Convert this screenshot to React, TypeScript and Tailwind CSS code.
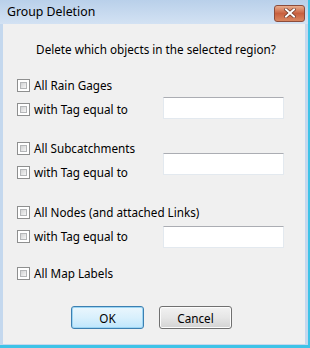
import React from "react";

const Check = ({ label }: { label: string }) => (
  <label className="flex items-center h-[24px] gap-[4px] whitespace-nowrap">
    <span className="w-[13px] h-[13px] shrink-0 border border-[#8e8f8f] bg-white p-[2px] flex">
      <span className="flex-1 border border-[#b4b6b8] bg-gradient-to-br from-[#d2d3d4] to-[#f6f6f6]" />
    </span>
    <span>{label}</span>
  </label>
);

const TagInput = ({ top }: { top: string }) => (
  <div className={`w-[121px] h-[22px] shrink-0 bg-white border border-[#e3e9ef] border-t-[#abadb3] ${top}`} />
);

const Group = ({ label, top }: { label: string; top: string }) => (
  <div className="flex">
    <div className="flex flex-col w-[146px]">
      <Check label={label} />
      <Check label="with Tag equal to" />
    </div>
    <TagInput top={top} />
  </div>
);

export default function App() {
  return (
    <div className="w-[310px] h-[348px] flex flex-col bg-[#c4d8ee] border-r-[2px] border-b-[3px] border-[#3ec3e7] font-['Noto_Sans',sans-serif] text-[11.7px] text-black">
      <div className="h-[24px] flex items-center justify-between pl-[7px] pr-[3px] bg-gradient-to-b from-[#b9d0ea] to-[#d3e2f3]">
        <span className="text-[12.3px] leading-none">Group Deletion</span>
        <div className="w-[31px] h-[17px] mt-[2px] rounded-[3px] border border-[#8b4c3c] bg-gradient-to-b from-[#e8ad8e] via-[#c8603f] to-[#d98660] flex items-center justify-center">
          <svg width="12" height="10" viewBox="0 0 12 10">
            <path d="M2 1.5 L10 8.5 M10 1.5 L2 8.5" stroke="#6a3424" strokeWidth="3.4" strokeLinecap="square" />
            <path d="M2 1.5 L10 8.5 M10 1.5 L2 8.5" stroke="#ffffff" strokeWidth="2" strokeLinecap="square" />
          </svg>
        </div>
      </div>
      <div className="flex-1 flex pl-[3px] pr-[3px] pb-[1px]">
        <div className="flex-1 bg-[#f0f0f0] flex flex-col pl-[14px] pt-[17px] leading-[16px]">
          <p className="text-center pr-[10px]">Delete which objects in the selected region?</p>
          <div className="mt-[16px]">
            <Group label="All Rain Gages" top="mt-[24px]" />
          </div>
          <div className="mt-[15px]">
            <Group label="All Subcatchments" top="mt-[17px]" />
          </div>
          <div className="mt-[16px]">
            <Group label="All Nodes (and attached Links)" top="mt-[26px]" />
          </div>
          <div className="mt-[13px]">
            <Check label="All Map Labels" />
          </div>
          <div className="mt-[21px] flex gap-[15px] pl-[54px]">
            <button className="w-[73px] h-[23px] rounded-[3px] border border-[#3c7fb1] bg-gradient-to-b from-[#eaf6fd] via-[#d9f0fc] to-[#bee6fd] shadow-[inset_0_0_0_1px_#9cd5f3]">
              OK
            </button>
            <button className="w-[73px] h-[23px] rounded-[3px] border border-[#707070] bg-gradient-to-b from-[#f2f2f2] via-[#e6e6e6] to-[#d3d3d3] shadow-[inset_0_0_0_1px_#fcfcfc]">
              Cancel
            </button>
          </div>
        </div>
      </div>
    </div>
  );
}
